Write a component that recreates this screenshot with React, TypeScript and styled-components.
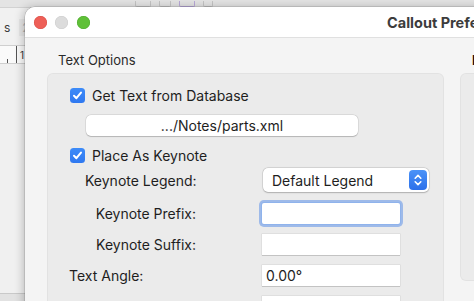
import React from "react";
import styled, { createGlobalStyle } from "styled-components";

const Global = createGlobalStyle`
  html, body { margin: 0; padding: 0; }
  body {
    width: 474px; height: 301px; overflow: hidden;
    font-family: Inter, "Liberation Sans", Arial, sans-serif;
    -webkit-font-smoothing: antialiased;
  }
`;

const Desktop = styled.div`
  position: relative;
  width: 474px;
  height: 301px;
  overflow: hidden;
  background: #efefef;
`;

/* ---------- background app (behind the window) ---------- */
const BgApp = styled.div`
  display: flex;
  flex-direction: column;
  width: 474px;
  height: 301px;
`;

const BgToolbar = styled.div`
  height: 7px;
  background: #e4e4e4;
  border-bottom: 1px solid #d2d2d2;
  display: flex;
  align-items: flex-end;
  gap: 8px;
  padding-left: 135px;
`;

const BgTool = styled.div<{ $w: number; $c?: string }>`
  width: ${(p) => p.$w}px;
  height: 5px;
  border: 1px solid ${(p) => p.$c || "#c4c4c4"};
  border-top: none;
  border-radius: 0 0 2px 2px;
`;

const BgTabs = styled.div`
  height: 37px;
  background: #f1f1f1;
  display: flex;
  align-items: center;
  gap: 6px;
  padding-left: 1px;
  font-size: 12px;
  color: #333;
`;

const BgTab = styled.span<{ $dim?: boolean }>`
  color: ${(p) => (p.$dim ? "#b5b5b5" : "#3a3a3a")};
  background: ${(p) => (p.$dim ? "#e6e6e6" : "transparent")};
  padding: 1px 3px;
  margin-top: 2px;
`;

const Ruler = styled.div`
  height: 17px;
  background: #fafafa;
  border-top: 1px solid #cfcfcf;
  border-bottom: 1px solid #cfcfcf;
  display: flex;
  align-items: flex-end;
  font-size: 10px;
  color: #333;
`;

const Tick = styled.div<{ $h: number; $w: number }>`
  width: ${(p) => p.$w}px;
  height: ${(p) => p.$h}px;
  border-right: 1px solid #555;
  flex: none;
`;

const RulerNum = styled.span`
  align-self: flex-start;
  margin: 3px 0 0 3px;
  font-size: 10px;
`;

const BgPage = styled.div`
  flex: 1;
  background: #f0f0f0;
  border-bottom: 1px solid #c9c9c9;
`;

const BgFooter = styled.div`
  height: 7px;
  background: #e2e2e2;
`;

/* ---------- window ---------- */
const Window = styled.div`
  position: absolute;
  left: 25px;
  top: 7px;
  width: 480px;
  height: 310px;
  background: #f4f4f4;
  border-radius: 10px 10px 0 0;
  box-shadow: 0 0 0 0.5px rgba(0, 0, 0, 0.2), -2px 0 10px rgba(0, 0, 0, 0.22);
  overflow: hidden;
  display: flex;
  flex-direction: column;
`;

const TitleBar = styled.div`
  flex: none;
  background: #ffffff;
  border-bottom: 1px solid #e0e0e0;
  display: flex;
  align-items: center;
  padding-left: 8.5px;
  box-sizing: border-box;
  height: 31px;
`;

const Light = styled.div<{ $c: string; $b: string }>`
  width: 13px;
  height: 13px;
  border-radius: 50%;
  background: ${(p) => p.$c};
  box-shadow: inset 0 0 0 0.5px ${(p) => p.$b};
  margin-right: 8.5px;
  flex: none;
`;

const Title = styled.div`
  margin-left: 289px;
  font-size: 14.5px;
  font-weight: 700;
  color: #3c3c3c;
  white-space: nowrap;
  margin-top: 1px;
`;

const Content = styled.div`
  display: flex;
  gap: 16px;
  padding: 14px 0 0 22px;
`;

const Section = styled.div<{ $w: number }>`
  width: ${(p) => p.$w}px;
  flex: none;
  display: flex;
  flex-direction: column;
`;

const SectionLabel = styled.div<{ $strong?: boolean }>`
  font-size: 13px;
  color: ${(p) => (p.$strong ? "#111" : "#2a2a2a")};
  font-weight: ${(p) => (p.$strong ? 700 : 400)};
  padding-left: ${(p) => (p.$strong ? 12 : 11)}px;
  height: 21px;
  line-height: 17px;
  white-space: nowrap;
`;

const Group = styled.div<{ $h: number }>`
  height: ${(p) => p.$h}px;
  background: #ebebeb;
  border-radius: 6px;
  box-shadow: inset 0 0 0 1px rgba(0, 0, 0, 0.035);
  display: flex;
  flex-direction: column;
  padding: 15px 0 0 0;
  box-sizing: border-box;
`;

const CheckRow = styled.div<{ $mt: number }>`
  display: flex;
  align-items: center;
  gap: 7px;
  height: 15px;
  margin-top: ${(p) => p.$mt}px;
  padding-left: 23px;
  font-size: 14px;
  color: #1e1e1e;
  white-space: nowrap;
`;

const CheckBox = styled.div`
  width: 15px;
  height: 15px;
  border-radius: 3.5px;
  background: linear-gradient(#3d8bf8, #2f78f0);
  display: flex;
  align-items: center;
  justify-content: center;
  flex: none;
`;

const PathField = styled.div`
  margin: 12px 0 0 39px;
  width: 272px;
  height: 21px;
  background: #fff;
  border-radius: 5px;
  box-shadow: 0 0 0 0.5px rgba(0, 0, 0, 0.12), 0 0.5px 1px rgba(0, 0, 0, 0.18);
  display: flex;
  align-items: center;
  justify-content: center;
  font-size: 14px;
  color: #1e1e1e;
`;

const FormRow = styled.div<{ $mt: number; $h: number }>`
  display: flex;
  align-items: center;
  height: ${(p) => p.$h}px;
  margin-top: ${(p) => p.$mt}px;
`;

const RowLabel = styled.div<{ $pl: number; $right?: boolean }>`
  width: 215px;
  box-sizing: border-box;
  flex: none;
  padding-left: ${(p) => (p.$right ? 0 : p.$pl)}px;
  padding-right: ${(p) => (p.$right ? p.$pl : 0)}px;
  text-align: ${(p) => (p.$right ? "right" : "left")};
  font-size: 14px;
  color: #1e1e1e;
  white-space: nowrap;
`;

const Popup = styled.div`
  width: 166px;
  height: 24px;
  margin-left: 1px;
  background: #fff;
  border-radius: 5px;
  box-shadow: 0 0 0 0.5px rgba(0, 0, 0, 0.14), 0 0.5px 1.5px rgba(0, 0, 0, 0.2);
  display: flex;
  align-items: center;
  justify-content: space-between;
  padding: 0 2px 0 9px;
  box-sizing: border-box;
  font-size: 14px;
  color: #1e1e1e;
`;

const Stepper = styled.div`
  width: 18px;
  height: 20px;
  border-radius: 4px;
  background: linear-gradient(#4b93f8, #2c70ea);
  display: flex;
  align-items: center;
  justify-content: center;
`;

const TextField = styled.div<{ $focus?: boolean }>`
  width: 138px;
  height: 21px;
  background: #fff;
  box-sizing: border-box;
  padding-left: 4px;
  display: flex;
  align-items: center;
  font-size: 14px;
  color: #1e1e1e;
  border-radius: ${(p) => (p.$focus ? "2px" : "0")};
  box-shadow: ${(p) =>
    p.$focus
      ? "0 0 0 1px #8fb3ec, 0 0 0 3px rgba(95, 145, 232, 0.55)"
      : "0 0 0 0.5px rgba(0,0,0,0.1), 0 1px 0 rgba(0,0,0,0.12)"};
`;

const Check = () => (
  <svg width="11" height="11" viewBox="0 0 11 11">
    <path d="M2 5.8 L4.4 8.2 L9 2.6" fill="none" stroke="#fff" strokeWidth="2" strokeLinecap="round" strokeLinejoin="round" />
  </svg>
);

const Chevrons = () => (
  <svg width="10" height="14" viewBox="0 0 10 14">
    <path d="M2.2 5.2 L5 2.4 L7.8 5.2 M2.2 8.8 L5 11.6 L7.8 8.8" fill="none" stroke="#fff" strokeWidth="1.6" strokeLinecap="round" strokeLinejoin="round" />
  </svg>
);

export default function App() {
  return (
    <>
      <Global />
      <Desktop>
        <BgApp>
          <BgToolbar>
            <BgTool $w={14} />
            <BgTool $w={10} />
            <BgTool $w={14} $c="#b9a8d8" />
            <BgTool $w={8} />
          </BgToolbar>
          <BgTabs>
            <BgTab>s</BgTab>
            <BgTab $dim>2</BgTab>
          </BgTabs>
          <Ruler>
            <Tick $w={7} $h={4} />
            <Tick $w={8} $h={17} />
            <RulerNum>1</RulerNum>
          </Ruler>
          <BgPage />
          <BgFooter />
        </BgApp>

        <Window>
          <TitleBar>
            <Light $c="#ee5f57" $b="#d84b44" />
            <Light $c="#dcdcdc" $b="#cbcbcb" />
            <Light $c="#5fc038" $b="#4aa72a" />
            <Title>Callout Preferences</Title>
          </TitleBar>
          <Content>
            <Section $w={397}>
              <SectionLabel>Text Options</SectionLabel>
              <Group $h={260}>
                <CheckRow $mt={0}>
                  <CheckBox><Check /></CheckBox>
                  Get Text from Database
                </CheckRow>
                <PathField>.../Notes/parts.xml</PathField>
                <CheckRow $mt={12}>
                  <CheckBox><Check /></CheckBox>
                  Place As Keynote
                </CheckRow>
                <FormRow $mt={5} $h={24}>
                  <RowLabel $pl={38}>Keynote Legend:</RowLabel>
                  <Popup>
                    Default Legend
                    <Stepper><Chevrons /></Stepper>
                  </Popup>
                </FormRow>
                <FormRow $mt={11} $h={21}>
                  <RowLabel $right $pl={66}>Keynote Prefix:</RowLabel>
                  <TextField $focus />
                </FormRow>
                <FormRow $mt={10} $h={21}>
                  <RowLabel $right $pl={66}>Keynote Suffix:</RowLabel>
                  <TextField />
                </FormRow>
                <FormRow $mt={10} $h={21}>
                  <RowLabel $pl={22}>Text Angle:</RowLabel>
                  <TextField>0.00°</TextField>
                </FormRow>
                <FormRow $mt={10} $h={21}>
                  <RowLabel $pl={22} />
                  <TextField />
                </FormRow>
              </Group>
            </Section>
            <Section $w={200}>
              <SectionLabel $strong>Leader</SectionLabel>
              <Group $h={208} />
            </Section>
          </Content>
        </Window>
      </Desktop>
    </>
  );
}
